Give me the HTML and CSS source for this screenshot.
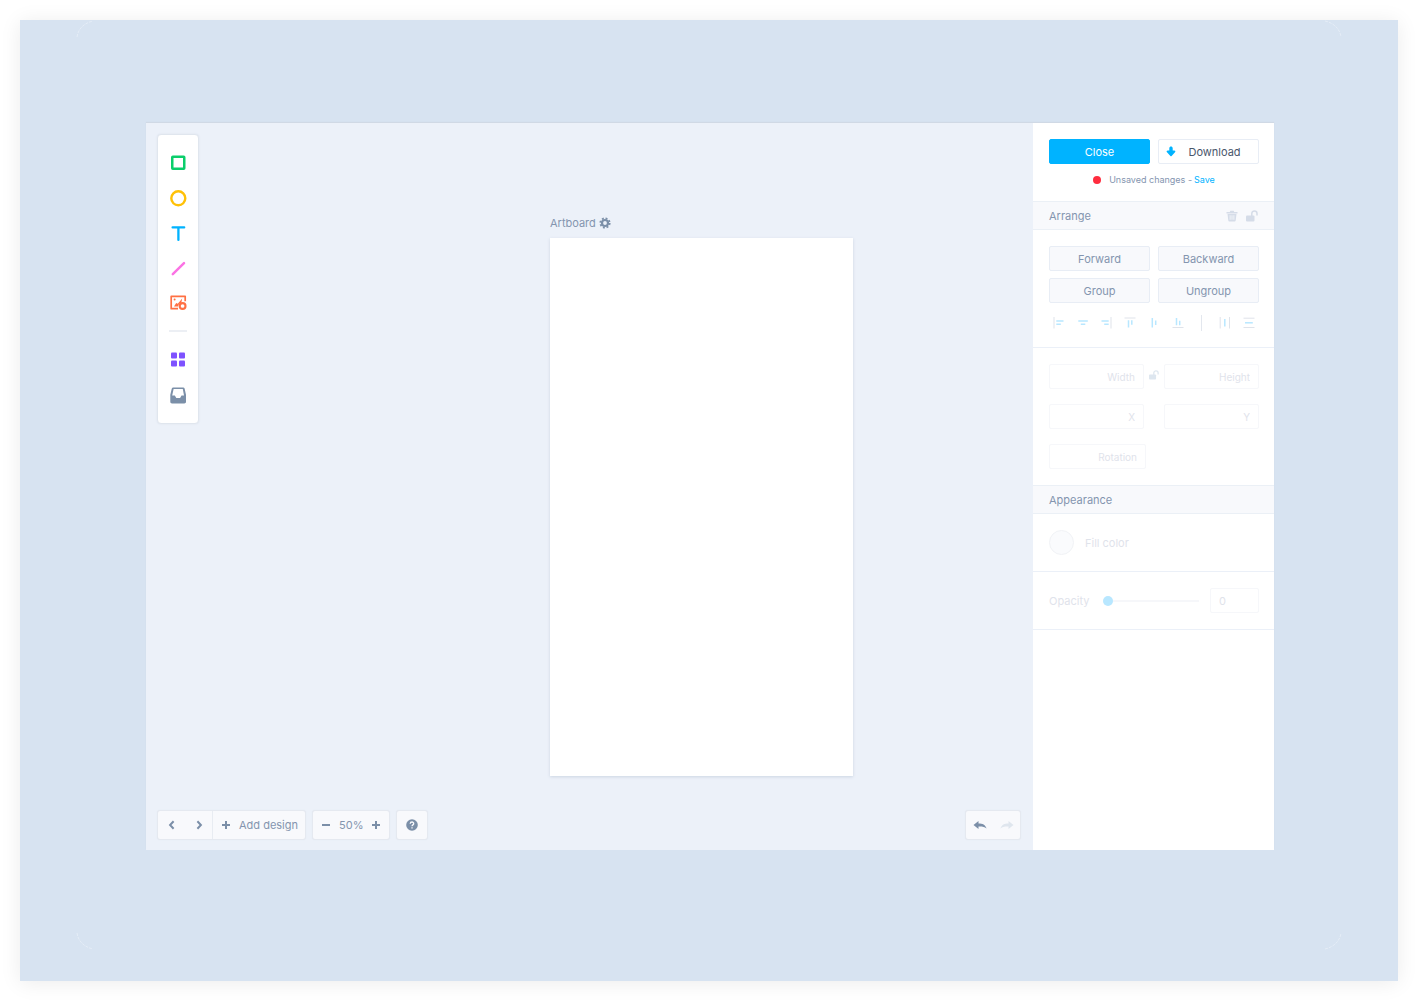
FILE: index.html
```html
<!DOCTYPE html>
<html lang="en">
<head>
    <meta charset="UTF-8">
    <meta name="viewport" content="width=device-width, initial-scale=1.0">
    <title>Artboard</title>
    <link rel="stylesheet" href="styles.css">
</head>
<body>
    <div class="frame">
        <svg class="corner top-left" viewBox="0 0 18 18"><path d="M1 17C2 9 8 3 17 1"/></svg>
        <svg class="corner top-right" viewBox="0 0 18 18"><path d="M1 1C10 3 16 9 17 17"/></svg>
        <svg class="corner bottom-left" viewBox="0 0 18 18"><path d="M1 1C2 9 8 15 17 17"/></svg>
        <svg class="corner bottom-right" viewBox="0 0 18 18"><path d="M1 17C10 15 16 9 17 1"/></svg>

        <div class="app">
            <main class="canvas">
                <nav class="tools" aria-label="Tools">
                    <button type="button" aria-label="Rectangle">
                        <svg width="18" height="18" viewBox="0 0 18 18" fill="none" stroke="#0bce6b" stroke-width="2.5"><rect x="3.25" y="2.75" width="12" height="12" rx=".5"/></svg>
                    </button>
                    <button type="button" aria-label="Ellipse">
                        <svg width="18" height="18" viewBox="0 0 18 18" fill="none" stroke="#ffc107" stroke-width="2.4"><circle cx="9.3" cy="9.3" r="7"/></svg>
                    </button>
                    <button type="button" aria-label="Text">
                        <svg width="18" height="18" viewBox="0 0 18 18" fill="none" stroke="#00b3ff" stroke-width="2.3" stroke-linecap="round"><path d="M3.6 3.4h11.6M9.4 3.4v12.5"/></svg>
                    </button>
                    <button type="button" aria-label="Line">
                        <svg width="18" height="18" viewBox="0 0 18 18" fill="none" stroke="#fb73e4" stroke-width="2.5" stroke-linecap="round"><path d="M3.8 15.2 15 4.2"/></svg>
                    </button>
                    <button type="button" aria-label="Add image">
                        <svg width="18" height="18" viewBox="0 0 18 18" fill="none" stroke="#ff7043">
                            <path d="M9 14.7H2.2V2.3h14v5" stroke-width="1.7" stroke-linejoin="round"/>
                            <path d="M5 12.600 7.200 9l1.600.8L13.200 4.500l-.9 4.200-2.300 1.200-1 2.700z" fill="#ff7043" stroke="none"/>
                            <circle cx="5.6" cy="5.6" r="1" fill="#ff7043" stroke="none"/>
                            <circle cx="13.6" cy="12" r="2.9" stroke-width="2.1"/>
                        </svg>
                    </button>
                    <hr>
                    <button type="button" aria-label="Components">
                        <svg width="18" height="18" viewBox="0 0 18 18" fill="#7e52ff"><rect x="2" y="1.5" width="6" height="6" rx="1"/><rect x="10" y="1.5" width="6" height="6" rx="1"/><rect x="2" y="9.5" width="6" height="6" rx="1"/><rect x="10" y="9.5" width="6" height="6" rx="1"/></svg>
                    </button>
                    <button type="button" aria-label="Library">
                        <svg width="18" height="18" viewBox="0 0 18 18" fill="#7b8fa8" fill-rule="evenodd"><path d="M4.2 1.5h10c.7 0 1.2.4 1.4 1.1l1.4 6.2v7c0 1-.7 1.7-1.7 1.7H3c-1 0-1.7-.7-1.7-1.7v-7l1.5-6.2c.2-.7.7-1.1 1.4-1.1zM4.6 3 3.2 9.5h2.6l1.5 2.4h3.8l1.4-2.4H15L13.8 3z"/></svg>
                    </button>
                </nav>

                <section class="artboard">
                    <h1 class="artboard-title">
                        Artboard
                        <button type="button" aria-label="Artboard settings">
                            <svg width="12" height="12" viewBox="0 0 12 12" fill="none" stroke="#7b8fa8"><circle cx="6" cy="6" r="3" stroke-width="2.2"/><circle cx="6" cy="6" r="4.7" stroke-width="1.8" stroke-dasharray="1.9 1.79"/></svg>
                        </button>
                    </h1>
                    <div class="artboard-page"></div>
                </section>

                <footer class="bottom-bar">
                    <div class="group">
                        <button type="button" class="arrow" aria-label="Previous">
                            <svg width="10" height="10" viewBox="0 0 10 10"><path d="M6.6 1.3 3.1 5l3.5 3.700"/></svg>
                        </button>
                        <button type="button" class="arrow" aria-label="Next">
                            <svg width="10" height="10" viewBox="0 0 10 10"><path d="M3.400 1.300 6.900 5 3.400 8.700"/></svg>
                        </button>
                        <button type="button" class="add">
                            <svg width="10" height="10" viewBox="0 0 10 10"><path d="M1 5h8M5 1v8"/></svg>
                            Add design
                        </button>
                    </div>
                    <div class="group zoom">
                        <button type="button" aria-label="Zoom out">
                            <svg width="10" height="10" viewBox="0 0 10 10"><path d="M1 5h8"/></svg>
                        </button>
                        <span>50%</span>
                        <button type="button" aria-label="Zoom in">
                            <svg width="10" height="10" viewBox="0 0 10 10"><path d="M1 5h8M5 1v8"/></svg>
                        </button>
                    </div>
                    <div class="group">
                        <button type="button" class="help" aria-label="Help">
                            <svg width="12" height="12" viewBox="0 0 12 12"><circle cx="6" cy="6" r="5.8" fill="#7b8fa8" stroke="none"/><path d="M4.2 4.7C4.3 2.4 7.8 2.5 7.7 4.6 7.6 5.9 6 5.9 6 7.2M6 8.3v1.2" stroke="#f8f9fc" stroke-width="1.3"/></svg>
                        </button>
                    </div>
                    <div class="group history">
                        <button type="button" aria-label="Undo">
                            <svg width="14" height="12" viewBox="0 0 14 12"><path class="solid" d="M.5 6 5.500 2v2.500c4 0 7 1.300 8 5-2-1.900-4.400-2.100-8-2V10z"/></svg>
                        </button>
                        <button type="button" aria-label="Redo" disabled>
                            <svg width="14" height="12" viewBox="0 0 14 12"><path class="solid" d="M13.500 6 8.500 2v2.500c-4 0-7 1.300-8 5 2-1.900 4.400-2.100 8-2V10z"/></svg>
                        </button>
                    </div>
                </footer>
            </main>

            <aside class="sidebar">
                <div class="file-actions">
                    <div class="button-grid">
                        <button type="button" class="btn primary">Close</button>
                        <button type="button" class="btn download">
                            <svg width="10" height="12" viewBox="0 0 10 12" fill="#00b3ff"><path d="M3.3 2.3C3.3 0 6.7 0 6.7 2.3V4.500h1.500c1.200 0 1.500 1 .8 1.700L5.600 10c-.4.4-.8.4-1.200 0L1 6.200c-.7-.7-.4-1.700.8-1.700h1.500z"/></svg>
                            Download
                        </button>
                    </div>
                    <p class="status"><i class="dot"></i>Unsaved changes - <a href="#">Save</a></p>
                </div>

                <div class="panel-head">
                    <h2>Arrange</h2>
                    <button type="button" aria-label="Delete">
                        <svg width="12" height="12" viewBox="0 0 12 12" fill="#d5dce8"><path d="M.5 2h3.300l.5-1.200h3.400L8.200 2h3.300v1.500H.5z"/><path fill-rule="evenodd" d="M1.500 4h9l-.8 6.500c-.1.600-.5 1-1.100 1H3.400c-.6 0-1-.4-1.100-1zM3.700 5.300v4.500h.8V5.300zm1.900 0v4.500h.8V5.300zm1.900 0v4.500h.8V5.300z"/></svg>
                    </button>
                    <button type="button" aria-label="Unlock">
                        <svg width="12" height="12" viewBox="0 0 12 12"><rect x="0" y="5.500" width="8.500" height="6" rx="1" fill="#d5dce8"/><path d="M5.800 6V3.400C5.800.3 11 .3 11 3.400v2.100" fill="none" stroke="#d5dce8" stroke-width="1.5"/></svg>
                    </button>
                </div>
                <div class="panel arrange">
                    <div class="button-grid">
                        <button type="button" class="btn">Forward</button>
                        <button type="button" class="btn">Backward</button>
                        <button type="button" class="btn">Group</button>
                        <button type="button" class="btn">Ungroup</button>
                    </div>
                    <div class="align">
                        <button type="button" aria-label="Align left" disabled><svg viewBox="0 0 12 12"><path class="edge" d="M1 0v11.500"/><path d="M3.300 4h7.200M3.300 7.200h4.500"/></svg></button>
                        <button type="button" aria-label="Align center" disabled><svg viewBox="0 0 12 12"><path d="M1.300 4h9.500M3.800 7.200h4.500"/></svg></button>
                        <button type="button" aria-label="Align right" disabled><svg viewBox="0 0 12 12"><path class="edge" d="M11 0v11.500"/><path d="M1.500 4h7.200M4.200 7.200h4.500"/></svg></button>
                        <button type="button" aria-label="Align top" disabled><svg viewBox="0 0 12 12"><path class="edge" d="M.5 1h11"/><path d="M4.500 3.300v7.200M7.800 3.300v4.500"/></svg></button>
                        <button type="button" aria-label="Align middle" disabled><svg viewBox="0 0 12 12"><path d="M4.300 1v9.500M7.700 3.500v4.500"/></svg></button>
                        <button type="button" aria-label="Align bottom" disabled><svg viewBox="0 0 12 12"><path class="edge" d="M.5 10.500h11"/><path d="M4.500 1v7.200M7.700 3.700v4.500"/></svg></button>
                        <span class="divider"></span>
                        <button type="button" aria-label="Distribute horizontally" disabled><svg viewBox="0 0 12 12"><path class="edge" d="M1.200 0v11.500M10.500 0v11.500"/><path d="M5.800 2v7.500"/></svg></button>
                        <button type="button" aria-label="Distribute vertically" disabled><svg viewBox="0 0 12 12"><path class="edge" d="M.5 1.200h11M.5 10.500h11"/><path d="M2 5.800h7.800"/></svg></button>
                    </div>
                </div>
                <div class="panel size">
                    <div class="size-row">
                        <input type="text" placeholder="Width" aria-label="Width" disabled>
                        <svg width="10" height="14" viewBox="0 0 12 17"><rect x="0" y="5.500" width="8.500" height="6" rx="1" fill="#dde6ef"/><path d="M5.800 6V3.400C5.800.3 11 .3 11 3.400v2.100" fill="none" stroke="#dde6ef" stroke-width="1.5"/></svg>
                        <input type="text" placeholder="Height" aria-label="Height" disabled>
                    </div>
                    <div class="size-row">
                        <input type="text" placeholder="X" aria-label="X" disabled>
                        <input type="text" placeholder="Y" aria-label="Y" disabled>
                    </div>
                    <div class="size-row">
                        <input type="text" class="rotation" placeholder="Rotation" aria-label="Rotation" disabled>
                    </div>
                </div>

                <div class="panel-head">
                    <h2>Appearance</h2>
                </div>
                <div class="panel fill">
                    <button type="button" class="swatch" id="fill" disabled></button>
                    <label for="fill">Fill color</label>
                </div>
                <div class="panel opacity">
                    <label for="opacity">Opacity</label>
                    <input type="range" id="opacity" min="0" max="100" value="0" disabled>
                    <input type="text" class="opacity-value" placeholder="0" aria-label="Opacity value" disabled>
                </div>
            </aside>
        </div>
    </div>
</body>
</html>
```

FILE: styles.css
```css
* {
    box-sizing: border-box;
}
body {
    margin: 0;
    padding: 20px;
    background: #fff;
    color: #8495af;
    font-family: Inter, "Liberation Sans", sans-serif;
    font-size: 11px;
    line-height: 16px;
}
button, input {
    font: inherit;
    color: inherit;
}
button {
    display: flex;
    align-items: center;
    justify-content: center;
    padding: 0;
    border: none;
    background: none;
    cursor: pointer;
}
h1, h2, p {
    margin: 0;
    font-size: 11px;
    font-weight: 400;
}
.frame {
    position: relative;
    display: flex;
    min-height: calc(100vh - 40px);
    padding: 103px 124px 131px 126px;
    background: #d7e3f1;
    box-shadow: 0 2px 20px rgba(0, 0, 0, 0.08);
}
.corner {
    position: absolute;
    width: 18px;
    height: 18px;
    fill: none;
    stroke: #e5edf7;
    stroke-dasharray: 3 1;
}
.top-left {
    top: 0;
    left: 56px;
}
.top-right {
    top: 0;
    right: 56px;
}
.bottom-left {
    bottom: 31px;
    left: 56px;
}
.bottom-right {
    bottom: 31px;
    right: 56px;
}
.app {
    display: flex;
    flex: 1;
    box-shadow: 0 -1px 1px #d0d9e5;
}

/* Canvas */
.canvas {
    position: relative;
    display: flex;
    flex: 1;
    flex-direction: column;
    align-items: flex-start;
    justify-content: space-between;
    padding: 11px 12px 10px 11px;
    background: #ecf1f9;
}
.tools {
    width: 42px;
    padding: 10px 0 11px;
    border: 1px solid #e0e6ee;
    border-radius: 4px;
    background: #fff;
    box-shadow: 0 0 2px #dbe2ec;
}
.tools button {
    width: 100%;
    height: 35px;
}
.tools hr {
    width: 18px;
    height: 2px;
    margin: 10px auto;
    border: none;
    background: #eceff4;
}
.artboard {
    position: absolute;
    top: 92px;
    left: 404px;
}
.artboard-title {
    display: flex;
    align-items: center;
    gap: 3px;
    margin-bottom: 7px;
}
.artboard-page {
    width: 303px;
    height: 538px;
    background: #fff;
    box-shadow: 0 1px 3px #ccd5e2;
}
.bottom-bar {
    display: flex;
    align-self: stretch;
    gap: 6px;
}
.group {
    display: flex;
    align-items: center;
    height: 30px;
    border: 1px solid #e5e9f0;
    border-radius: 3px;
    background: #f8f9fc;
    box-shadow: 0 0 1px #dfe5ee;
}
.group button {
    height: 28px;
}
.group svg {
    fill: none;
    stroke: #7b8fa8;
    stroke-width: 2;
}
.group .solid {
    fill: #7b8fa8;
    stroke: none;
}
.group :disabled .solid {
    fill: #dfe6ee;
}
.arrow {
    width: 27px;
}
.add {
    gap: 8px;
    padding: 0 7px 0 8px;
    border-left: 1px solid #e8ecf2;
}
.zoom button {
    width: 26px;
}
.help {
    width: 30px;
}
.history {
    margin-left: auto;
}
.history button {
    width: 27px;
}

/* Sidebar */
.sidebar {
    width: 241px;
    background: #fff;
}
.file-actions {
    padding: 16px 15px 13px 16px;
}
.button-grid {
    display: grid;
    grid-template-columns: 1fr 1fr;
    gap: 7px 8px;
}
.btn {
    height: 25px;
    border: 1px solid #e8edf5;
    border-radius: 2px;
    background: #f8f9fc;
}
.btn.primary {
    border-color: #00b3ff;
    background: #00b3ff;
    color: #fff;
}
.btn.download {
    gap: 12px;
    padding-right: 10px;
    background: #fff;
    color: #49566b;
}
.status {
    display: flex;
    align-items: center;
    justify-content: center;
    gap: 2px;
    margin-top: 8px;
    font-size: 9px;
}
.status a {
    color: #00b3ff;
    text-decoration: none;
}
.dot {
    width: 8px;
    height: 8px;
    margin-right: 6px;
    border-radius: 50%;
    background: #ff2d3f;
}
.panel-head {
    display: flex;
    align-items: center;
    gap: 8px;
    height: 29px;
    padding: 0 16px;
    border: solid #ebf0f6;
    border-width: 1px 0;
    background: #f8f9fc;
}
.panel-head h2 {
    margin-right: auto;
}
.panel {
    padding: 16px 15px 16px 16px;
    border-bottom: 1px solid #ebf0f8;
}
.align {
    display: grid;
    grid-template-columns: repeat(9, 1fr);
    align-items: center;
    height: 16px;
    margin: 12px -2px 0;
}
.align svg {
    width: 12px;
    height: 12px;
    fill: none;
    stroke: #b8e7ff;
    stroke-width: 1.5;
}
.align .edge {
    stroke: #dfe3ea;
    stroke-width: 1;
}
.divider {
    justify-self: center;
    width: 1px;
    height: 16px;
    background: #e3e7ee;
}
.size {
    border-bottom: none;
}
.size-row {
    display: flex;
    align-items: center;
    justify-content: space-between;
}
.size-row + .size-row {
    margin-top: 15px;
}
.panel input[type="text"] {
    width: 95px;
    height: 25px;
    padding: 0 8px;
    border: 1px solid #f6f7fa;
    border-radius: 2px;
    background: #fff;
    font-size: 10px;
    text-align: right;
}
.panel input::placeholder {
    color: #dfe3eb;
    opacity: 1;
}
.panel input.rotation {
    width: 97px;
}
.fill, .opacity {
    display: flex;
    align-items: center;
    color: #dfe3eb;
}
.fill {
    gap: 11px;
}
.swatch {
    width: 25px;
    height: 25px;
    border: 1px solid #f1f3f6;
    border-radius: 50%;
    background: #fafbfd;
}
.opacity input[type="range"] {
    flex: 1;
    min-width: 0;
    height: 10px;
    margin: 0 11px 0 14px;
    background: none;
    appearance: none;
}
.opacity input::-webkit-slider-runnable-track {
    height: 2px;
    background: #f6f7fa;
}
.opacity input::-webkit-slider-thumb {
    width: 10px;
    height: 10px;
    margin-top: -4px;
    border-radius: 50%;
    background: #b8e7ff;
    appearance: none;
}
.panel input.opacity-value {
    width: 49px;
    font-size: 11px;
    text-align: left;
}
```
